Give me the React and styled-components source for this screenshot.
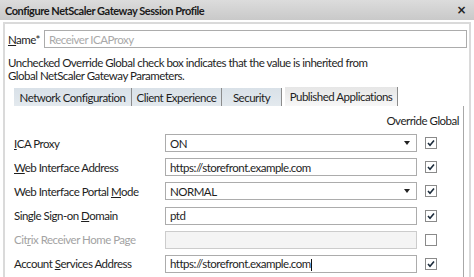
import styled, { createGlobalStyle } from "styled-components";

const Global = createGlobalStyle`
  body {
    margin: 0;
    background: #ffffff;
    font-family: Lato, "Open Sans", sans-serif;
    color: #1e1e1e;
  }
`;

const Window = styled.div`
  width: 474px;
  height: 277px;
  overflow: hidden;
  background: #ffffff;
  display: flex;
  flex-direction: column;
`;

const TitleBar = styled.div`
  height: 20px;
  flex: none;
  display: flex;
  align-items: center;
  justify-content: space-between;
  padding: 0 8px 0 5px;
  background: linear-gradient(#dcdcdc, #c9c9c9);
  font-size: 11px;
  font-weight: 700;
  letter-spacing: -0.45px;
  color: #1a1a1a;
`;

const Close = styled.span`
  font-family: "DejaVu Sans", sans-serif;
  font-size: 12px;
  font-weight: 700;
  color: #222;
`;

const Frame = styled.div`
  flex: 1;
  margin: 2px 3px 0 3px;
  border: 2px solid #dadada;
  border-bottom: none;
  padding: 6px 2px 0 3px;
  display: flex;
  flex-direction: column;
  font-size: 11.5px;
  letter-spacing: -0.5px;
`;

const NameRow = styled.div`
  display: flex;
  align-items: center;
  gap: 4px;
`;

const Input = styled.div`
  flex: ${(p) => (p.$grow ? 1 : "none")};
  width: ${(p) => (p.$grow ? "auto" : "242px")};
  height: 16px;
  border: 1px solid ${(p) => (p.$disabled ? "#cccccc" : "#acacac")};
  background: ${(p) => (p.$disabled ? "#f4f4f4" : "#ffffff")};
  color: ${(p) => (p.$muted ? "#a9a9a9" : "#1e1e1e")};
  display: flex;
  align-items: center;
  justify-content: space-between;
  padding: 0 4px;
  box-sizing: content-box;
`;

const Desc = styled.p`
  margin: 8px 0 0;
  line-height: 13px;
`;

const Tabs = styled.div`
  display: flex;
  margin: 6px 0 0 6px;
  height: 18px;
  align-items: stretch;
`;

const Tab = styled.div`
  width: ${(p) => p.$w}px;
  flex: none;
  box-sizing: border-box;
  display: flex;
  align-items: center;
  justify-content: center;
  background: ${(p) =>
    p.$active ? "linear-gradient(#e6e6e6, #f7f7f7)" : "linear-gradient(#d9e1e8, #e3e9ee)"};
  border-right: 1px solid #8c8c8c;
  margin-left: ${(p) => (p.$active ? "3px" : "0")};
  ${(p) => p.$active && "margin-top: -1px;"}
`;

const Panel = styled.div`
  flex: 1;
  margin-right: 3px;
  border-right: 1px solid #a8a8a8;
  padding: 8px 4px 0 6px;
  display: flex;
  flex-direction: column;
`;

const Override = styled.div`
  text-align: right;
  margin-bottom: 7px;
`;

const Row = styled.div`
  display: flex;
  align-items: center;
  height: 18px;
  margin-bottom: 6.2px;
`;

const Label = styled.div`
  width: 151px;
  flex: none;
  color: ${(p) => (p.$disabled ? "#a3a3a3" : "#1e1e1e")};
`;

const Check = styled.div`
  width: 10px;
  height: 10px;
  border: 1px solid #8a8a8a;
  margin-left: 8px;
  display: flex;
  align-items: center;
  justify-content: center;
  background: #fff;
`;

const Arrow = styled.span`
  width: 0;
  height: 0;
  border-left: 3.5px solid transparent;
  border-right: 3.5px solid transparent;
  border-top: 4px solid #222;
  margin-right: 2px;
`;

const Cursor = styled.span`
  display: inline-block;
  width: 1px;
  height: 12px;
  background: #111;
  vertical-align: middle;
`;

function Tick() {
  return (
    <svg width="8" height="8" viewBox="0 0 8 8">
      <path d="M1 4 L3 6.2 L7 1.5" fill="none" stroke="#1b2b3b" strokeWidth="1.6" />
    </svg>
  );
}

const tabs = [
  { name: "Network Configuration", w: 118 },
  { name: "Client Experience", w: 90 },
  { name: "Security", w: 60 },
  { name: "Published Applications", w: 113, active: true },
];

const rows = [
  { pre: "", key: "I", post: "CA Proxy", value: "ON", select: true, checked: true },
  { pre: "", key: "W", post: "eb Interface Address", value: "https://storefront.example.com", checked: true },
  { pre: "Web Interface Portal ", key: "M", post: "ode", value: "NORMAL", select: true, checked: true },
  { pre: "Single Sign-on ", key: "D", post: "omain", value: "ptd", checked: true },
  { pre: "Cit", key: "r", post: "ix Receiver Home Page", value: "", disabled: true, checked: false },
  { pre: "Account ", key: "S", post: "ervices Address", value: "https://storefront.example.com", checked: true, cursor: true },
];

export default function App() {
  return (
    <Window>
      <Global />
      <TitleBar>
        <span>Configure NetScaler Gateway Session Profile</span>
        <Close>×</Close>
      </TitleBar>
      <Frame>
        <NameRow>
          <span>
            <u>N</u>ame*
          </span>
          <Input $grow $muted>Receiver ICAProxy</Input>
        </NameRow>
        <Desc>
          Unchecked Override Global check box indicates that the value is inherited from
          <br />
          Global NetScaler Gateway Parameters.
        </Desc>
        <Tabs>
          {tabs.map((t) => (
            <Tab key={t.name} $w={t.w} $active={t.active}>
              {t.name}
            </Tab>
          ))}
        </Tabs>
        <Panel>
          <Override>Override Global</Override>
          {rows.map((r) => (
            <Row key={r.key + r.post}>
              <Label $disabled={r.disabled}>
                {r.pre}
                <u>{r.key}</u>
                {r.post}
              </Label>
              <Input $disabled={r.disabled}>
                <span>
                  {r.value}
                  {r.cursor && <Cursor />}
                </span>
                {r.select && <Arrow />}
              </Input>
              <Check>{r.checked && <Tick />}</Check>
            </Row>
          ))}
        </Panel>
      </Frame>
    </Window>
  );
}
